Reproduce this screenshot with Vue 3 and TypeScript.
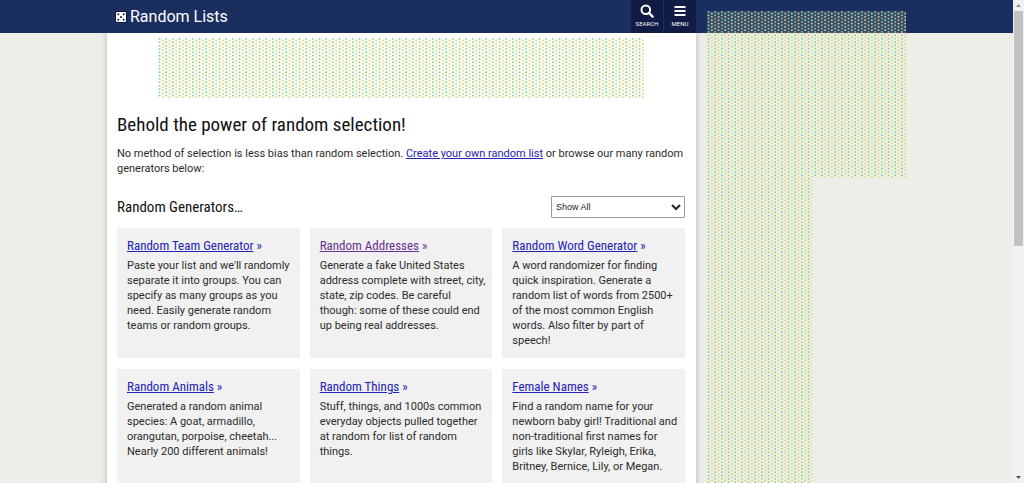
<script setup lang="ts">
import { ref } from 'vue'

interface Generator {
  title: string
  text: string
  visited?: boolean
}

interface Dot {
  x: number
  y: number
  color: string
}

const generators: Generator[] = [
  {
    title: 'Random Team Generator',
    text: "Paste your list and we'll randomly separate it into groups. You can specify as many groups as you need. Easily generate random teams or random groups.",
  },
  {
    title: 'Random Addresses',
    text: 'Generate a fake United States address complete with street, city, state, zip codes. Be careful though: some of these could end up being real addresses.',
    visited: true,
  },
  {
    title: 'Random Word Generator',
    text: 'A word randomizer for finding quick inspiration. Generate a random list of words from 2500+ of the most common English words. Also filter by part of speech!',
  },
  {
    title: 'Random Animals',
    text: 'Generated a random animal species: A goat, armadillo, orangutan, porpoise, cheetah... Nearly 200 different animals!',
  },
  {
    title: 'Random Things',
    text: 'Stuff, things, and 1000s common everyday objects pulled together at random for list of random things.',
  },
  {
    title: 'Female Names',
    text: 'Find a random name for your newborn baby girl! Traditional and non-traditional first names for girls like Skylar, Ryleigh, Erika, Britney, Bernice, Lily, or Megan.',
  },
]

const filter = ref('Show All')

// One 20x20 tile of the dotted placeholder: six staggered columns of dots.
const palette = [
  ['#6fcf9a', '#8fda7c', '#74cdc4'],
  ['#efd080', '#d8dc80', '#eebc8c'],
]
const step = 20 / 6
const dots: Dot[] = []
for (let c = 0; c < 6; c++) {
  for (let r = 0; r < 6; r++) {
    const colors = palette[c % 2]
    dots.push({
      x: c * step + 0.7,
      y: r * step + (c % 2 ? 1.8 : 0.2),
      color: colors[(r + c) % 3],
    })
  }
}
</script>

<template>
  <div class="window">
    <div class="page">
      <header class="bar">
        <div class="wrap">
          <div class="bar-main">
            <a class="brand" href="#">
              <svg class="die" viewBox="0 0 12 12" aria-hidden="true">
                <rect width="12" height="12" fill="#0b1638" />
                <rect x="1" y="1" width="10" height="10" rx="1" fill="#fff" />
                <g fill="#0b1638">
                  <circle cx="3.3" cy="3.3" r="1" />
                  <circle cx="8.7" cy="3.3" r="1" />
                  <circle cx="6" cy="6" r="1" />
                  <circle cx="3.3" cy="8.7" r="1" />
                  <circle cx="8.7" cy="8.7" r="1" />
                </g>
              </svg>
              <span>Random Lists</span>
            </a>
            <nav class="tools">
              <button type="button">
                <svg viewBox="0 0 14 14" aria-hidden="true">
                  <circle cx="5.8" cy="5.8" r="4.3" fill="none" stroke="#fff" stroke-width="2" />
                  <path d="M9 9l3.6 3.6" stroke="#fff" stroke-width="2.4" stroke-linecap="round" />
                </svg>
                <span>SEARCH</span>
              </button>
              <button type="button">
                <svg viewBox="0 0 14 14" aria-hidden="true">
                  <path d="M1.5 3h11M1.5 7h11M1.5 11h11" stroke="#fff" stroke-width="2" />
                </svg>
                <span>MENU</span>
              </button>
            </nav>
          </div>
        </div>
      </header>

      <div class="wrap body">
        <main class="content">
          <svg class="banner" aria-hidden="true">
            <defs>
              <pattern id="dots" width="20" height="20" patternUnits="userSpaceOnUse">
                <rect width="20" height="20" fill="#fbffb0" fill-opacity="0.14" />
                <rect
                  v-for="(d, i) in dots"
                  :key="i"
                  :x="d.x"
                  :y="d.y"
                  width="1.7"
                  height="1.5"
                  :fill="d.color"
                />
              </pattern>
            </defs>
            <rect width="100%" height="100%" fill="url(#dots)" />
          </svg>

          <h1>Behold the power of random selection!</h1>
          <p class="intro">
            No method of selection is less bias than random selection.
            <a href="#">Create your own random list</a> or browse our many random generators below:
          </p>

          <div class="list-head">
            <h2><label for="filter">Random Generators…</label></h2>
            <select id="filter" v-model="filter">
              <option>Show All</option>
            </select>
          </div>

          <section class="cards">
            <article v-for="g in generators" :key="g.title" class="card">
              <h3 :class="{ visited: g.visited }"><a href="#">{{ g.title }}</a> »</h3>
              <p>{{ g.text }}</p>
            </article>
          </section>
        </main>

        <aside class="side">
          <svg class="side-top" aria-hidden="true">
            <rect width="100%" height="100%" fill="url(#dots)" />
          </svg>
          <svg class="side-rest" aria-hidden="true">
            <rect width="100%" height="100%" fill="url(#dots)" />
          </svg>
        </aside>
      </div>
    </div>

    <div class="scroll" aria-hidden="true">
      <svg viewBox="0 0 11 11"><path d="M3 7l2.5-3L8 7z" fill="#8a8a8a" /></svg>
      <div class="track"><div class="thumb"></div></div>
      <svg viewBox="0 0 11 11"><path d="M3 4l2.5 3L8 4z" fill="#505050" /></svg>
    </div>
  </div>
</template>

<style>
body {
  margin: 0;
  background: #eeeee9;
}
</style>

<style scoped>
.window {
  display: flex;
  height: 100vh;
  overflow: hidden;
  font-family: Roboto, "Liberation Sans", sans-serif;
  font-size: 11px;
  line-height: 15px;
  color: #2b2b2b;
}
.page {
  flex: 1;
  min-width: 0;
  display: flex;
  flex-direction: column;
}
.wrap {
  width: 100%;
  max-width: 799px;
  margin: 0 auto;
}
.bar {
  background: #1a2e60;
}
.bar-main {
  display: flex;
  justify-content: space-between;
  margin-right: 210px;
  height: 33px;
}
.brand {
  display: flex;
  align-items: center;
  gap: 3px;
  padding-left: 8px;
  color: #fff;
  font-size: 16px;
  text-decoration: none;
}
.die {
  width: 12px;
  height: 12px;
}
.tools {
  display: flex;
  gap: 1px;
}
.tools button {
  display: flex;
  flex-direction: column;
  align-items: center;
  gap: 2px;
  width: 32px;
  padding: 4px 0 0;
  border: 0;
  background: #101c44;
  color: #fff;
  font: 6px/8px Roboto, "Liberation Sans", sans-serif;
}
.tools svg {
  width: 14px;
  height: 14px;
}
.body {
  display: flex;
  gap: 11px;
  flex: 1;
}
.content {
  flex: 1;
  min-width: 0;
  box-sizing: border-box;
  padding: 5px 11px 11px 10px;
  background: #fff;
  box-shadow: 0 0 6px rgba(0, 0, 0, 0.25);
  clip-path: inset(0 -8px);
}
.banner {
  display: block;
  width: 486px;
  max-width: 100%;
  height: 60px;
  margin: 0 auto;
}
h1,
h2,
h3 {
  margin: 0;
  font-family: "Roboto Condensed", "Liberation Sans Narrow", Roboto, sans-serif;
  font-weight: 400;
  color: #111;
}
h1 {
  margin-top: 15px;
  font-size: 19px;
  line-height: 24px;
}
.intro {
  margin: 9px 0 20px;
}
a {
  color: #2222b8;
}
.list-head {
  display: flex;
  align-items: center;
  justify-content: space-between;
}
h2 {
  font-size: 15px;
  line-height: 20px;
}
select {
  width: 134px;
  height: 22px;
  padding: 0;
  border: 1px solid #999;
  border-radius: 1px;
  background: #fff;
  color: #222;
  font: 9px "Liberation Sans", sans-serif;
}
.cards {
  display: grid;
  grid-template-columns: repeat(3, 1fr);
  gap: 11px 10px;
  margin-top: 10px;
}
.card {
  padding: 10px 4px 10px 10px;
  background: #f1f1f1;
}
.card h3 {
  font-size: 13px;
  line-height: 16px;
  color: #2222b8;
}
.card h3.visited,
.card h3.visited a {
  color: #663092;
}
.card p {
  margin: 4px 0 0;
}
.side {
  flex: none;
  display: flex;
  flex-direction: column;
  width: 199px;
  margin-top: -22px;
  z-index: 1;
}
.side svg {
  display: block;
}
.side-top {
  width: 100%;
  height: 167px;
}
.side-rest {
  width: 105px;
  flex: 1;
}
.scroll {
  display: flex;
  flex-direction: column;
  width: 11px;
  background: #f1f1f1;
}
.scroll svg {
  width: 11px;
  height: 11px;
}
.track {
  flex: 1;
}
.thumb {
  height: 51%;
  margin: 0 1px;
  background: #c1c1c1;
}
</style>
